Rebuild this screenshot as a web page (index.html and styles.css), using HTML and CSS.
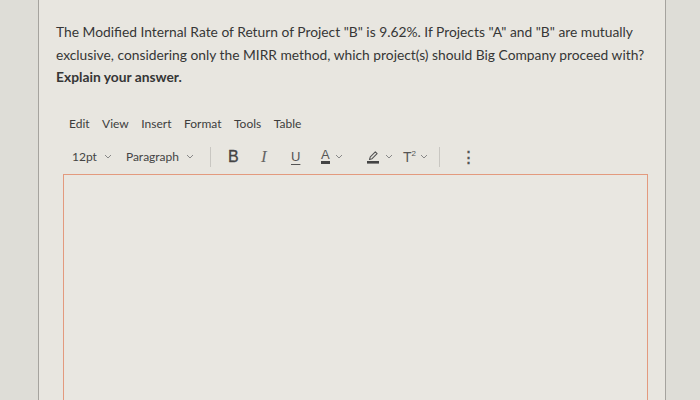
FILE: index.html
```html
<!DOCTYPE html>
<html>
<head>
<meta charset="utf-8">
<link rel="stylesheet" href="styles.css">
</head>
<body>
<div class="card">
  <p class="question">The Modified Internal Rate of Return of Project "B" is 9.62%. If Projects "A" and "B" are mutually<br>exclusive, considering only the MIRR method, which project(s) should Big Company proceed with?<br><b>Explain your answer.</b></p>
  <div class="menu">
    <span>Edit</span><span>View</span><span>Insert</span><span>Format</span><span>Tools</span><span>Table</span>
  </div>
  <div class="toolbar">
    <span class="drop d1">12pt <svg class="chev" viewBox="0 0 8 5"><path d="M1 1l3 3 3-3" fill="none" stroke="#888" stroke-width="1"/></svg></span>
    <span class="drop d2">Paragraph <svg class="chev" viewBox="0 0 8 5"><path d="M1 1l3 3 3-3" fill="none" stroke="#888" stroke-width="1"/></svg></span>
    <span class="sep"></span>
    <span class="btn bold">B</span>
    <span class="btn ital">I</span>
    <span class="btn und">U</span>
    <span class="btn bA"><span class="acol">A</span><svg class="chev" viewBox="0 0 8 5"><path d="M1 1l3 3 3-3" fill="none" stroke="#888" stroke-width="1"/></svg></span>
    <span class="btn bP"><svg class="pen" viewBox="0 0 14 14"><path d="M3.5 9.5l0.8-2.6 5-5 1.8 1.8-5 5z" fill="none" stroke="#555" stroke-width="1.1" stroke-linejoin="round"/><rect x="1" y="11" width="12" height="2.6" fill="#444"/></svg><svg class="chev" viewBox="0 0 8 5"><path d="M1 1l3 3 3-3" fill="none" stroke="#888" stroke-width="1"/></svg></span>
    <span class="btn sup"><span class="tt">T<sup>2</sup></span><svg class="chev" viewBox="0 0 8 5"><path d="M1 1l3 3 3-3" fill="none" stroke="#888" stroke-width="1"/></svg></span>
    <span class="sep sep2"></span>
    <span class="more">⋮</span>
  </div>
  <div class="editor"></div>
</div>
</body>
</html>
```
FILE: styles.css
```css
html, body {
  margin: 0;
  padding: 0;
  height: 100%;
  overflow: hidden;
}
body {
  background: #deddd7;
  font-family: Lato, "Noto Sans", sans-serif;
  color: #3b3b3b;
}
.card {
  margin-left: 38px;
  width: 628px;
  height: 400px;
  background: #e8e6e0;
  border-left: 1px solid #a5a39e;
  border-right: 1px solid #a5a39e;
  padding: 21px 0 0 17px;
  box-sizing: border-box;
  overflow: hidden;
}
.question {
  margin: 0;
  white-space: nowrap;
  font-size: 13.8px;
  line-height: 22.5px;
  color: #363636;
}
.question b {
  font-weight: 700;
}
.menu {
  margin-top: 27px;
  margin-left: 13px;
  display: flex;
  gap: 12.5px;
  font-size: 12px;
  color: #3d3d3d;
}
.toolbar {
  margin-top: 16px;
  margin-left: 16px;
  display: flex;
  align-items: center;
  height: 20px;
  font-size: 12px;
  color: #444;
}
.drop {
  display: flex;
  align-items: center;
  gap: 7px;
}
.d1 {
  margin-right: 14px;
}
.d2 {
  margin-right: 16px;
}
.chev {
  width: 8px;
  height: 5px;
  flex: none;
}
.sep {
  width: 1px;
  height: 20px;
  background: #c9c7c2;
  margin-right: 17px;
}
.btn {
  display: flex;
  align-items: center;
  gap: 5px;
  flex: none;
}
.bold {
  width: 33px;
  font-family: "Liberation Sans", Arial, sans-serif;
  font-weight: 400;
  font-size: 16px;
  -webkit-text-stroke: 0.3px #444;
  color: #444;
}
.ital {
  width: 30px;
  font-family: "Liberation Serif", serif;
  font-style: italic;
  font-size: 17px;
  color: #666;
}
.und {
  width: 30px;
  font-family: "Liberation Sans", sans-serif;
  font-size: 13px;
  text-decoration: underline;
  text-decoration-thickness: 1px;
  text-underline-offset: 3px;
  color: #555;
}
.bA {
  width: 45px;
}
.acol {
  font-family: "Liberation Sans", sans-serif;
  font-size: 13px;
  color: #555;
  border-bottom: 3px solid #444;
  line-height: 12px;
}
.bP {
  width: 37px;
}
.pen {
  width: 14px;
  height: 14px;
}
.sup {
  width: 36px;
  gap: 4px;
}
.tt {
  font-family: "Liberation Sans", sans-serif;
  font-size: 14px;
  color: #555;
}
.tt sup {
  font-size: 8px;
  vertical-align: 6px;
  line-height: 0;
}
.sep2 {
  margin-right: 21px;
}
.more {
  font-size: 15px;
  font-weight: 700;
  color: #555;
}
.editor {
  margin-top: 7px;
  margin-left: 7px;
  width: 583px;
  height: 260px;
  border: 1.5px solid #e39a7e;
  background: #e9e7e1;
}
```
